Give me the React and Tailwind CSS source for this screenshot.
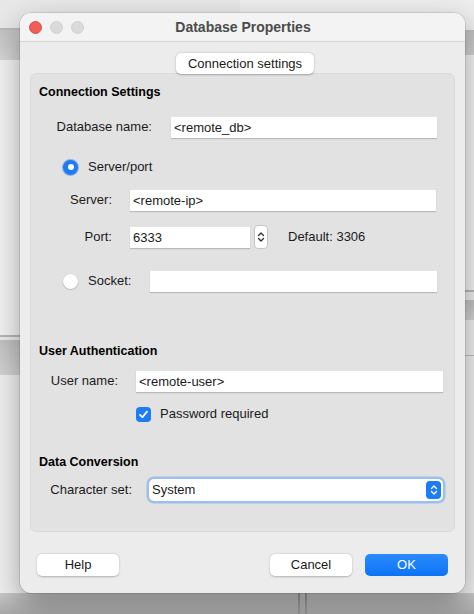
import React from "react";

const font = { fontFamily: '"Liberation Sans", Arial, sans-serif' };

const Field = ({ value, width }) => (
    <div
        className="h-[22px] bg-white flex items-center pl-[3px] text-[13px] text-[#1a1a1a] shadow-[0_1px_1px_rgba(0,0,0,0.18)] border-t border-[#e4e4e4]"
        style={{ width }}
    >
        {value}
    </div>
);

const Radio = ({ checked }) =>
    checked ? (
        <div className="w-[15px] h-[15px] rounded-full bg-[#1b7cf4] flex items-center justify-center shadow-[0_0_0_1px_rgba(20,100,220,0.4)]">
            <div className="w-[6px] h-[6px] rounded-full bg-white" />
        </div>
    ) : (
        <div className="w-[15px] h-[15px] rounded-full bg-white shadow-[0_0.5px_1.5px_rgba(0,0,0,0.3)]" />
    );

const Heading = ({ children, className = "" }) => (
    <div className={`h-[16px] pl-[8px] text-[12.5px] font-bold text-black leading-[16px] ${className}`}>
        {children}
    </div>
);

const Button = ({ children, primary, className = "" }) => (
    <div
        className={`h-[22px] w-[82px] rounded-[5px] flex items-center justify-center text-[13px] ${
            primary
                ? "bg-gradient-to-b from-[#2a8bff] to-[#0a74f5] text-white"
                : "bg-white text-[#1a1a1a] shadow-[0_0.5px_2px_rgba(0,0,0,0.25)]"
        } ${className}`}
    >
        {children}
    </div>
);

const Chevrons = ({ color }) => (
    <svg width="8" height="12" viewBox="0 0 8 12" fill="none">
        <path d="M1.5 4.5 L4 2 L6.5 4.5" stroke={color} strokeWidth="1.4" strokeLinecap="round" strokeLinejoin="round" />
        <path d="M1.5 7.5 L4 10 L6.5 7.5" stroke={color} strokeWidth="1.4" strokeLinecap="round" strokeLinejoin="round" />
    </svg>
);

const Backdrop = () => (
    <div className="w-[474px] h-[614px] flex flex-col">
        <div className="flex h-[593px]">
            {/* left half */}
            <div className="w-[240px] flex flex-col bg-[#f1f1f1]">
                <div className="h-[28px] bg-[#e8e8e8]" />
                <div className="h-[2px] bg-[#b9b9b9]" />
                <div className="h-[30px] bg-gradient-to-b from-[#c3c3c3] to-[#d6d6d6]" />
                <div className="h-[275px] bg-[#f3f3f3]" />
                <div className="h-[2px] bg-[#b6b6b6]" />
                <div className="h-[3px] bg-[#ececec]" />
                <div className="h-[35px] bg-gradient-to-b from-[#c2c2c2] to-[#d3d3d3]" />
                <div className="flex-1 bg-[#f0f0f0]" />
            </div>
            {/* right half */}
            <div className="flex-1 flex flex-col bg-[#f1f1f1]">
                <div className="h-[30px] bg-[#ededed]" />
                <div className="h-[25px] bg-gradient-to-b from-[#bdbdbd] to-[#d0d0d0]" />
                <div className="h-[235px] bg-[#f3f3f3]" />
                <div className="h-[2px] bg-[#b8b8b8]" />
                <div className="h-[8px] bg-[#ececec]" />
                <div className="h-[20px] bg-gradient-to-b from-[#c0c0c0] to-[#d2d2d2]" />
                <div className="h-[35px] bg-[#f0f0f0]" />
                <div className="h-[1px] bg-[#bdbdbd]" />
                <div className="flex-1 bg-[#f0f0f0]" />
            </div>
        </div>
        <div className="h-[21px] flex bg-gradient-to-b from-[#c8c8c8] to-[#a9a9a9]">
            <div className="w-[298px]" />
            <div className="w-[2px] bg-[#9a9a9a]" />
            <div className="w-[5px]" />
            <div className="w-[2px] bg-[#9a9a9a]" />
        </div>
    </div>
);

export default function App() {
    return (
        <div className="relative w-[474px] h-[614px] overflow-hidden" style={font}>
            <Backdrop />

            {/* dialog window */}
            <div className="absolute left-[20px] top-[13px] w-[445px] h-[580px] rounded-[11px] bg-[#ececec] shadow-[0_12px_30px_rgba(0,0,0,0.35),0_0_0_0.5px_rgba(0,0,0,0.2)] flex flex-col overflow-hidden">
                {/* title bar */}
                <div className="h-[29px] bg-[#f3f3f3] border-b border-[#d5d5d5] flex items-center relative">
                    <div className="flex items-center gap-[8px] pl-[9px]">
                        <div className="w-[13px] h-[13px] rounded-full bg-[#ee5f57] border border-[#dc4e46]" />
                        <div className="w-[13px] h-[13px] rounded-full bg-[#dadada] border border-[#d0d0d0]" />
                        <div className="w-[13px] h-[13px] rounded-full bg-[#dadada] border border-[#d0d0d0]" />
                    </div>
                    <div className="flex-1 text-center text-[14px] font-bold text-[#4b4b4b] pr-[63px]">
                        Database Properties
                    </div>
                </div>

                {/* tab */}
                <div className="pt-[11px] flex justify-center relative z-10">
                    <div className="h-[21px] w-[138px] rounded-[5px] bg-white shadow-[0_0.5px_2px_rgba(0,0,0,0.3)] flex items-center justify-center text-[13px] text-[#1a1a1a] ml-[5px]">
                        Connection settings
                    </div>
                </div>

                {/* panel */}
                <div className="mx-[10px] -mt-px h-[459px] rounded-[6px] bg-[#e2e2e2] border border-[#dbdbdb] pt-[10px] text-[13px] text-[#1a1a1a]">
                    <Heading>Connection Settings</Heading>

                    <div className="mt-[16px] h-[22px] flex items-center">
                        <div className="w-[121px] text-right">Database name:</div>
                        <div className="ml-[19px]">
                            <Field value="<remote_db>" width={266} />
                        </div>
                    </div>

                    <div className="mt-[18px] h-[22px] flex items-center pl-[32px]">
                        <Radio checked />
                        <div className="ml-[10px]">Server/port</div>
                    </div>

                    <div className="mt-[11px] h-[22px] flex items-center">
                        <div className="w-[81px] text-right">Server:</div>
                        <div className="ml-[18px]">
                            <Field value="<remote-ip>" width={306} />
                        </div>
                    </div>

                    <div className="mt-[15px] h-[22px] flex items-center">
                        <div className="w-[81px] text-right">Port:</div>
                        <div className="ml-[18px]">
                            <Field value="6333" width={120} />
                        </div>
                        <div className="ml-[4px] w-[14px] h-[24px] rounded-[4px] bg-white border border-[#c4c4c4] flex items-center justify-center">
                            <Chevrons color="#333" />
                        </div>
                        <div className="ml-[20px]">Default: 3306</div>
                    </div>

                    <div className="mt-[22px] h-[22px] flex items-center pl-[32px]">
                        <Radio />
                        <div className="ml-[10px] w-[52px]">Socket:</div>
                        <div className="ml-[10px]">
                            <Field value="" width={287} />
                        </div>
                    </div>

                    <Heading className="mt-[51px]">User Authentication</Heading>

                    <div className="mt-[11px] h-[22px] flex items-center">
                        <div className="w-[87px] text-right">User name:</div>
                        <div className="ml-[18px]">
                            <Field value="<remote-user>" width={307} />
                        </div>
                    </div>

                    <div className="mt-[11px] h-[22px] flex items-center pl-[105px]">
                        <div className="w-[15px] h-[15px] rounded-[4px] bg-[#1b7cf4] flex items-center justify-center">
                            <svg width="11" height="11" viewBox="0 0 11 11" fill="none">
                                <path d="M2 5.8 L4.4 8.2 L9 2.6" stroke="white" strokeWidth="1.8" strokeLinecap="round" strokeLinejoin="round" />
                            </svg>
                        </div>
                        <div className="ml-[9px]">Password required</div>
                    </div>

                    <Heading className="mt-[29px]">Data Conversion</Heading>

                    <div className="mt-[9px] h-[22px] flex items-center">
                        <div className="w-[101px] text-right">Character set:</div>
                        <div className="ml-[17px] w-[294px] h-[22px] rounded-[5px] bg-white shadow-[0_0_0_2.5px_#9cc0ee] flex items-center justify-between pl-[3px] pr-[2px]">
                            <span>System</span>
                            <div className="w-[15px] h-[18px] rounded-[4px] bg-[#1b7cf4] flex items-center justify-center">
                                <Chevrons color="white" />
                            </div>
                        </div>
                    </div>
                </div>

                {/* buttons */}
                <div className="mt-[22px] flex items-center px-[17px]">
                    <Button>Help</Button>
                    <div className="flex-1" />
                    <Button>Cancel</Button>
                    <Button primary className="ml-[13px] w-[83px]">OK</Button>
                </div>
            </div>
        </div>
    );
}
